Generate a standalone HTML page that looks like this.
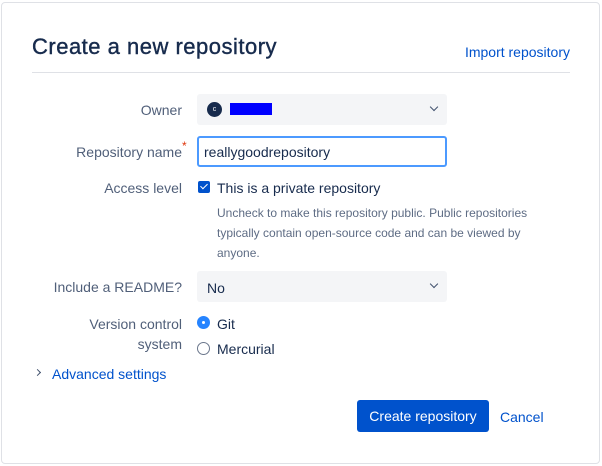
<!DOCTYPE html>
<html><head><style>
body{margin:0;width:602px;height:466px;background:#fff;font-family:"Liberation Sans",sans-serif;color:#172b4d;position:relative;overflow:hidden}
.a{position:absolute}
.card{left:1px;top:2px;width:597px;height:460px;border:1px solid #dfe1e6;border-radius:4px}
.lbl{right:420px;font-size:14px;color:#505f79;text-align:right;white-space:nowrap}
.sel{left:197px;width:250px;height:31px;background:#f4f5f7;border-radius:3px}
.chev{right:10px;top:10px;width:5px;height:5px;border-right:1.6px solid #42526e;border-bottom:1.6px solid #42526e;transform:rotate(45deg)}
.t{font-size:14px;color:#172b4d;white-space:nowrap}
</style></head><body>
<div class="a card"></div>
<div class="a" style="left:32px;top:34px;font-size:22px;letter-spacing:0.5px;-webkit-text-stroke:0.4px #172b4d;color:#172b4d;white-space:nowrap">Create a new repository</div>
<div class="a" style="right:32px;top:44px;font-size:14px;color:#0052cc">Import repository</div>
<div class="a" style="left:32px;top:72px;width:538px;height:1px;background:#dfe1e6"></div>

<div class="a lbl" style="top:102px">Owner</div>
<div class="a sel" style="top:94px"><div class="a" style="left:10px;top:8px;width:15px;height:15px;border-radius:50%;background:#172b4d;color:#fff;font-size:7px;text-align:center;line-height:15px">c</div><div class="a" style="left:33px;top:9px;width:42px;height:12px;background:#0000ff"></div><div class="a chev"></div></div>

<div class="a lbl" style="top:144px">Repository name</div>
<div class="a" style="left:182px;top:139px;color:#de350b;font-size:12px">*</div>
<div class="a" style="left:197px;top:136px;width:246px;height:27px;border:2px solid #4c9aff;border-radius:3px;background:#fff"><div class="a t" style="left:5px;top:6px">reallygoodrepository</div></div>

<div class="a lbl" style="top:180px">Access level</div>
<div class="a" style="left:198px;top:181px;width:12px;height:12px;background:#0052cc;border-radius:2px"><div class="a" style="left:4px;top:1px;width:3px;height:6px;border-right:1.6px solid #fff;border-bottom:1.6px solid #fff;transform:rotate(45deg)"></div></div>
<div class="a t" style="left:217px;top:180px">This is a private repository</div>
<div class="a" style="left:217px;top:203px;font-size:12px;line-height:20px;color:#5e6c84;width:340px">Uncheck to make this repository public. Public repositories<br>typically contain open-source code and can be viewed by<br>anyone.</div>

<div class="a lbl" style="top:279px">Include a README?</div>
<div class="a sel" style="top:271px"><div class="a t" style="left:10px;top:9px">No</div><div class="a chev"></div></div>

<div class="a lbl" style="top:314px;line-height:20px">Version control<br>system</div>
<div class="a" style="left:197px;top:316px;width:13px;height:13px;border-radius:50%;background:#2684ff"><div class="a" style="left:5px;top:5px;width:3px;height:3px;border-radius:50%;background:#fff"></div></div>
<div class="a t" style="left:217px;top:316px">Git</div>
<div class="a" style="left:197px;top:342px;width:11px;height:11px;border-radius:50%;border:1px solid #6b778c"></div>
<div class="a t" style="left:217px;top:341px">Mercurial</div>

<div class="a" style="left:35px;top:370px;width:4px;height:4px;border-right:1.3px solid #42526e;border-bottom:1.3px solid #42526e;transform:rotate(-45deg)"></div>
<div class="a" style="left:52px;top:366px;font-size:14px;color:#0052cc">Advanced settings</div>

<div class="a" style="left:357px;top:400px;width:132px;height:32px;background:#0052cc;border-radius:3px;color:#fff;font-size:14px;text-align:center;line-height:32px">Create repository</div>
<div class="a" style="left:500px;top:409px;font-size:14px;color:#0052cc">Cancel</div>
</body></html>
